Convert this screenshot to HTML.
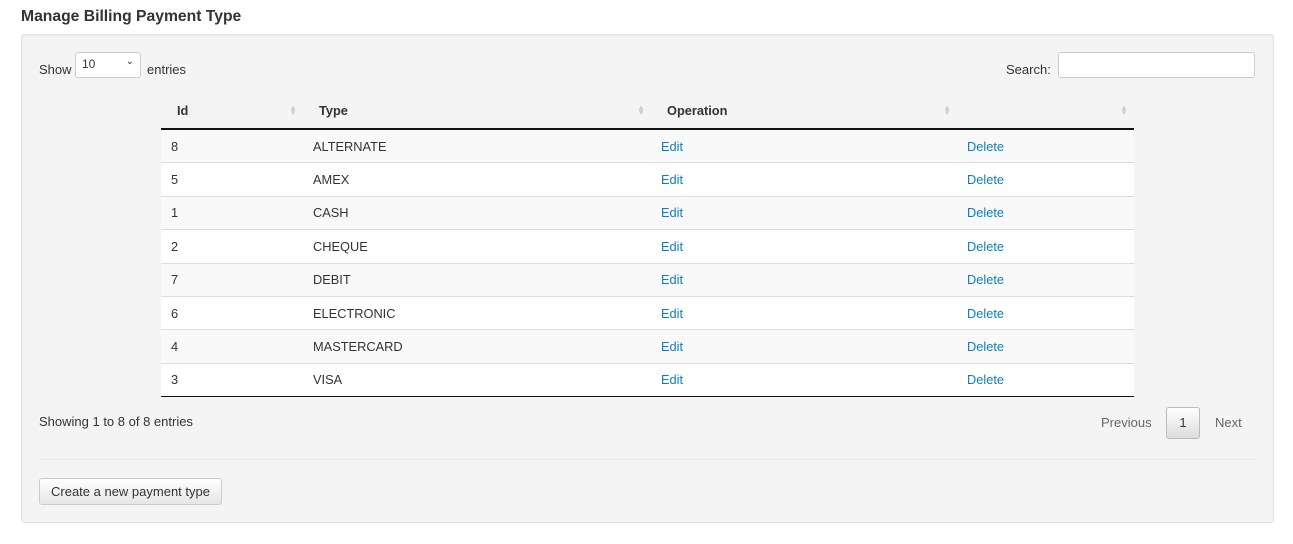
<!DOCTYPE html>
<html><head><style>
body{margin:0;background:#fff;font-family:"Liberation Sans",Arial,sans-serif;font-size:13px;color:#333;}
h3{position:absolute;left:21px;top:8px;margin:0;font-size:15.7px;font-weight:bold;color:#333}
.panel{position:absolute;left:21px;top:34px;width:1251px;height:487px;background:#f4f4f4;border:1px solid #e3e3e3;border-radius:3px;box-shadow:inset 0 1px 1px rgba(0,0,0,.05)}
.abs{position:absolute}
.sel{left:53px;top:17px;width:66px;height:26px;border:1px solid #ccc;border-radius:3px;background:#fff;box-sizing:border-box;font-size:12px;padding:4px 6px}
.inp{left:1036px;top:17px;width:197px;height:26px;border:1px solid #ccc;border-radius:3px;background:#fff;box-sizing:border-box}
table{position:absolute;left:139px;top:58px;width:973px;border-collapse:collapse;font-size:12.8px}
th{height:35px;text-align:left;font-weight:bold;border-bottom:2px solid #111;padding:0 0 0 16px;position:relative}
th .s{position:absolute;right:6px;top:12px;color:#ccc;font-size:8px;line-height:5px}
td{height:32.4px;padding:0 0 0 10px;border-top:1px solid #ddd}
tr:first-child td{border-top:none}
tbody tr:nth-child(odd) td{background:#f9f9f9}
tbody tr:nth-child(even) td{background:#fff}
tbody tr:last-child td{border-bottom:1px solid #111}
a{color:#0b7fc4;text-decoration:none}
.btn{border:1px solid #ccc;border-radius:3px;background:linear-gradient(#fff,#e6e6e6);box-sizing:border-box;text-align:center}
</style></head><body>
<h3>Manage Billing Payment Type</h3>
<div class="panel">
<div class="abs" style="left:17px;top:27px">Show</div>
<div class="abs sel">10<span style="position:absolute;right:6px;top:3px;font-size:10px">&#8964;</span></div>
<div class="abs" style="left:125px;top:27px">entries</div>
<div class="abs" style="left:984px;top:27px">Search:</div>
<div class="abs inp"></div>
<table>
<thead><tr>
<th style="width:126px">Id<span class="s">▲<br>▼</span></th>
<th style="width:332px">Type<span class="s">▲<br>▼</span></th>
<th style="width:290px">Operation<span class="s">▲<br>▼</span></th>
<th><span class="s">▲<br>▼</span></th>
</tr></thead>
<tbody>
<tr><td>8</td><td>ALTERNATE</td><td><a>Edit</a></td><td><a>Delete</a></td></tr>
<tr><td>5</td><td>AMEX</td><td><a>Edit</a></td><td><a>Delete</a></td></tr>
<tr><td>1</td><td>CASH</td><td><a>Edit</a></td><td><a>Delete</a></td></tr>
<tr><td>2</td><td>CHEQUE</td><td><a>Edit</a></td><td><a>Delete</a></td></tr>
<tr><td>7</td><td>DEBIT</td><td><a>Edit</a></td><td><a>Delete</a></td></tr>
<tr><td>6</td><td>ELECTRONIC</td><td><a>Edit</a></td><td><a>Delete</a></td></tr>
<tr><td>4</td><td>MASTERCARD</td><td><a>Edit</a></td><td><a>Delete</a></td></tr>
<tr><td>3</td><td>VISA</td><td><a>Edit</a></td><td><a>Delete</a></td></tr>
</tbody></table>
<div class="abs" style="left:17px;top:379px">Showing 1 to 8 of 8 entries</div>
<div class="abs" style="left:1079px;top:380px;color:#666">Previous</div>
<div class="abs btn" style="left:1144px;top:372px;width:34px;height:32px;line-height:30px;background:linear-gradient(#fff,#dcdcdc);border-color:#bbb">1</div>
<div class="abs" style="left:1193px;top:380px;color:#666">Next</div>
<div class="abs" style="left:17px;top:424px;width:1216px;border-top:1px solid #e8e8e8"></div>
<div class="abs btn" style="left:17px;top:443px;width:183px;height:27px;line-height:25px;color:#333">Create a new payment type</div>
</div>
</body></html>
